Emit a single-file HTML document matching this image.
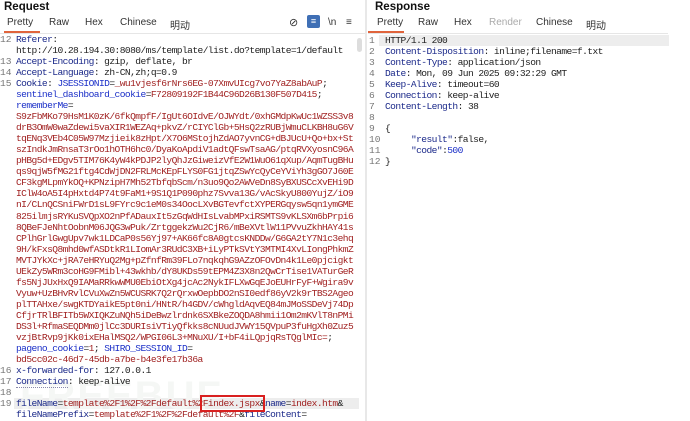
<!DOCTYPE html><html><head><style>
body{margin:0;width:690px;height:421px;background:#fff;overflow:hidden;position:relative;font-family:"Liberation Sans",sans-serif}
.h{position:absolute;font-weight:bold;font-size:11.5px;color:#111;top:1px}
.tabs{position:absolute;top:17px;font-size:10px;color:#333}
.tabs span{position:absolute;white-space:nowrap}
.ed{position:absolute;top:34px;font-family:"Liberation Mono",monospace;font-size:9.6px;letter-spacing:-0.57px;line-height:11.03px;white-space:pre;color:#222}
.n{display:inline-block;width:16px;color:#777;text-align:left;letter-spacing:0}
.k{color:#1c2a8a}.v{color:#a12222}.b{color:#1c30c8}
.pad{display:inline-block;width:16px}
</style></head><body>
<div class="h" style="left:4px">Request</div>
<div class="h" style="left:375px">Response</div>
<div class="tabs" style="left:0;width:365px">
<span style="left:7px">Pretty</span><span style="left:49px">Raw</span><span style="left:85px">Hex</span><span style="left:120px">Chinese</span><span style="left:170px">明动</span>
<span style="left:289px;top:-1px;font-size:11px">⊘</span>
<span style="left:307px;top:-2px;width:13px;height:13px;background:#3f6fb5;border-radius:2px;color:#fff;font-size:9px;text-align:center;line-height:13px">≡</span>
<span style="left:328px">\n</span><span style="left:346px">≡</span>
</div>
<div style="position:absolute;left:4px;top:31px;width:36px;height:2px;background:#e0643c"></div>
<div style="position:absolute;left:0;top:33px;width:365px;height:1px;background:#e6e6e6"></div>
<div class="tabs" style="left:365px;width:325px">
<span style="left:12px">Pretty</span><span style="left:53px">Raw</span><span style="left:89px">Hex</span><span style="left:124px;color:#aaa">Render</span><span style="left:171px">Chinese</span><span style="left:221px">明动</span>
</div>
<div style="position:absolute;left:368px;top:31px;width:36px;height:2px;background:#e0643c"></div>
<div style="position:absolute;left:368px;top:33px;width:300px;height:1px;background:#e6e6e6"></div>
<div style="position:absolute;left:365px;top:0;width:2px;height:421px;background:#e8e8e8"></div>
<div style="position:absolute;left:357px;top:38px;width:5px;height:14px;background:#ddd;border-radius:3px"></div>
<div style="position:absolute;left:14px;top:398px;width:345px;height:11px;background:#ededed"></div>
<div style="position:absolute;left:379px;top:35px;width:290px;height:11px;background:#ededed"></div>
<div style="position:absolute;left:20px;top:374px;font:bold 40px 'Liberation Sans',sans-serif;color:#f5f7f5;letter-spacing:2px">FREEBUF</div>
<div class="ed" style="left:0"><span class="n">12</span><span class="k">Referer</span>:
<span class="pad"></span>http://10.28.194.30:8080/ms/template/list.do?template=1/default
<span class="n">13</span><span class="k">Accept-Encoding</span>: gzip, deflate, br
<span class="n">14</span><span class="k">Accept-Language</span>: zh-CN,zh;q=0.9
<span class="n">15</span><span class="k">Cookie</span>: <span class="b">JSESSIONID</span>=<span class="v">_wu1vjesf6rNrs6EG-07XmvUIcg7vo7YaZ8abAuP</span>;
<span class="pad"></span><span class="b">sentinel_dashboard_cookie</span>=<span class="v">F72809192F1B44C96D26B130F507D415</span>;
<span class="pad"></span><span class="b">rememberMe</span>=<span class="v">
<span class="pad"></span>S9zFbMKo79HsM1K0zK/6fkQmpfF/IgUt6OIdvE/OJWYdt/0xhGMdpKwUc1WZSS3v8
<span class="pad"></span>drB3OmW0waZdewi5vaXIR1WEZAq+pkvZ/rCIYClGb+5HsQ2zRUBjWmuCLKBH8uG6V
<span class="pad"></span>tqENq3VEb4C05W97Mzjieik8zHpt/X7O6MStojhZdAO7yvnCG+dBJUcU+Qo+bx+St
<span class="pad"></span>szIndkJmRnsaT3rOo1hOTH6hc0/DyaKoApdiV1adtQFswTsaAG/ptqRVXyosnC96A
<span class="pad"></span>pHBg5d+EDgv5TIM76K4yW4kPDJP2lyQhJzGiweizVfE2W1WuO61qXup/AqmTugBHu
<span class="pad"></span>qs9qjW5fMG21ftg4CdWjDN2FRLMcKEpFLYS0FG1jtqZSwYcQyCeYViYh3gGO7J60E
<span class="pad"></span>CF3kgMLpmYkOQ+KPNzipH7Mh52TbfqbScm/n3uo9Qo2AWVeDn8SyBXUSCcXvEHi9D
<span class="pad"></span>IClW4oA5I4pHxtd4P74t9FaM1+9S1Q1P090phz7Svva13G/vAcSkyU800YujZ/iO9
<span class="pad"></span>nI/CLnQCSniFWrD1sL9FYrc9c1eM0s34OocLXvBGTevfctXYPERGqysw5qn1ymGME
<span class="pad"></span>825ilmjsRYKuSVQpXO2nPfADauxIt5zGqWdHIsLvabMPxiRSMTS9vKLSXm6bPrpi6
<span class="pad"></span>8QBeFJeNhtOobnM06JQG3wPuk/ZrtggekzWu2CjR6/mBeXVtlW11PVvuZkhHAY41s
<span class="pad"></span>CPlhGrlGwgUpv7wk1LDCaP0s56Yj97+AK66fc8A0gtcsKNDDw/G6GA2tY7N1c3ehq
<span class="pad"></span>9H/kFxsQ8mhd0wfASDtkR1LIomAr3RUdC3XB+iLyPTkSVtY3MTMI4XvLIongPhkmZ
<span class="pad"></span>MVTJYkXc+jRA7eHRYuQ2Mg+pZfnfRm39FLo7nqkqhG9AZzOFOvDn4k1Le0pjcigkt
<span class="pad"></span>UEkZy5WRm3coHG9FMibl+43wkhb/dY8UKDs59tEPM4Z3X8n2QwCrTise1VATurGeR
<span class="pad"></span>fs5NjJUxHxQ9IAMaRRkwWMU0EbiOtXg4jcAc2NykIFLXwGqEJoEUHrFyF+Wgira9v
<span class="pad"></span>Vyuw+UzBHvRvlCVuXwZn5WCUSRK7Q2rQrxwOepbDO2nSI0edf86yV2k9rTBS2Ageo
<span class="pad"></span>plTTAHxe/swgKTDYaikE5pt0ni/HNtR/h4GDV/cWhgldAqvEQ84mJMoSSDeVj74Dp
<span class="pad"></span>CfjrTRlBFITb5WXIQKZuNQh5iDeBwzlrdnk6SXBkeZOQDA8hmii1Om2mKVlT8nPMi
<span class="pad"></span>DS3l+RfmaSEQDMm0jlCc3DURIsiVTiyQfkks8cNUudJVWY15QVpuP3fuHgXh0Zuz5
<span class="pad"></span>vzjBtRvp9jKk0ixEHalMSQ2/WPGI06L3+MNuXU/I+bF4iLQpjqRsTQglMIc=</span>;
<span class="pad"></span><span class="b">pageno_cookie</span>=<span class="v">1</span>; <span class="b">SHIRO_SESSION_ID</span>=
<span class="pad"></span><span class="v">bd5cc02c-46d7-45db-a7be-b4e3fe17b36a</span>
<span class="n">16</span><span class="k">x-forwarded-for</span>: 127.0.0.1
<span class="n">17</span><span class="k" style="border-bottom:1px dotted #88a">Connection</span>: keep-alive
<span class="n">18</span>
<span class="n">19</span><span class="k">fileName</span>=<span class="v">template%2F1%2F%2Fdefault%2Findex.jspx</span>&amp;<span class="k">name</span>=<span class="v">index.htm</span>&amp;
<span class="pad"></span><span class="k">fileNamePrefix</span>=<span class="v">template%2F1%2F%2Fdefault%2F</span>&amp;<span class="k">fileContent</span>=</div>
<div style="position:absolute;left:200px;top:395px;width:65px;height:17px;border:2px solid #d92020;box-sizing:border-box"></div>
<div class="ed" style="left:369px;top:35px"><span class="n">1</span>HTTP/1.1 200
<span class="n">2</span><span class="k">Content-Disposition</span>: inline;filename=f.txt
<span class="n">3</span><span class="k">Content-Type</span>: application/json
<span class="n">4</span><span class="k">Date</span>: Mon, 09 Jun 2025 09:32:29 GMT
<span class="n">5</span><span class="k">Keep-Alive</span>: timeout=60
<span class="n">6</span><span class="k">Connection</span>: keep-alive
<span class="n">7</span><span class="k">Content-Length</span>: 38
<span class="n">8</span>
<span class="n">9</span>{
<span class="n">10</span>     <span class="k">"result"</span>:false,
<span class="n">11</span>     <span class="k">"code"</span>:<span class="b">500</span>
<span class="n">12</span>}</div>
</body></html>
